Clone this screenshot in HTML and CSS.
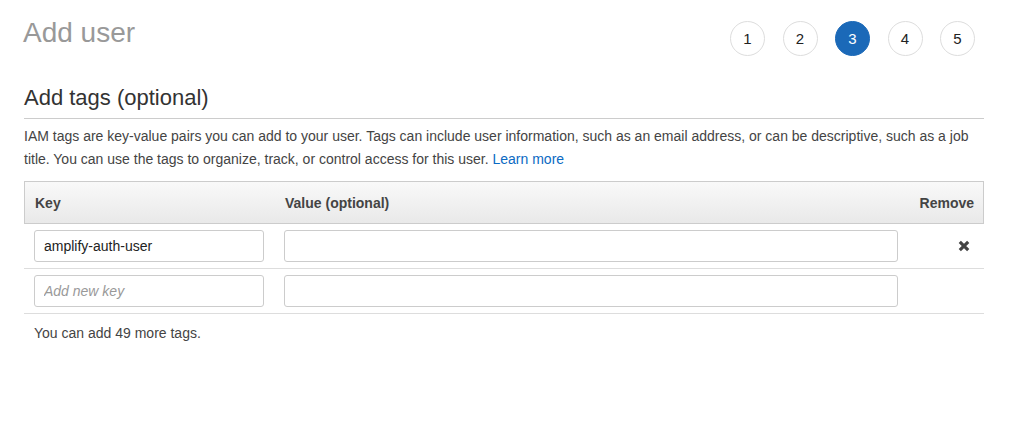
FILE: index.html
```html
<!DOCTYPE html>
<html lang="en">
<head>
<meta charset="utf-8">
<title>Add user</title>
<link rel="stylesheet" href="styles.css">
</head>
<body>
<div class="page">
  <header class="top">
    <h1 class="title">Add user</h1>
    <ol class="steps">
      <li class="step">1</li>
      <li class="step">2</li>
      <li class="step active">3</li>
      <li class="step">4</li>
      <li class="step">5</li>
    </ol>
  </header>

  <h2 class="section">Add tags (optional)</h2>
  <p class="desc">IAM tags are key-value pairs you can add to your user. Tags can include user information, such as an email address, or can be descriptive, such as a job title. You can use the tags to organize, track, or control access for this user. <a href="#" class="link">Learn more</a></p>

  <div class="table">
    <div class="thead">
      <div class="th">Key</div>
      <div class="th">Value (optional)</div>
      <div class="th th-right">Remove</div>
    </div>
    <div class="tr">
      <div class="td"><input class="field" type="text" value="amplify-auth-user"></div>
      <div class="td"><input class="field" type="text" value=""></div>
      <div class="td td-right">
        <svg class="x" viewBox="0 0 10 10" width="12" height="12" aria-label="Remove"><path d="M1.5 1.5 L8.5 8.5 M8.5 1.5 L1.5 8.5" stroke="#444" stroke-width="2.6" stroke-linecap="butt"/></svg>
      </div>
    </div>
    <div class="tr">
      <div class="td"><input class="field" type="text" placeholder="Add new key"></div>
      <div class="td"><input class="field" type="text" value=""></div>
      <div class="td td-right"></div>
    </div>
  </div>

  <p class="note">You can add 49 more tags.</p>
</div>
</body>
</html>
```

FILE: styles.css
```css
* { box-sizing: border-box; }

html, body {
  margin: 0;
  padding: 0;
  background: #fff;
}

body {
  font-family: "Liberation Sans", Arial, Helvetica, sans-serif;
  color: #444;
  font-size: 14px;
}

.page {
  width: 960px;
  margin-left: 24px;
}

.top {
  display: flex;
  justify-content: space-between;
  align-items: flex-start;
  padding-top: 17px;
}

.title {
  margin: 0 0 0 -1px;
  font-size: 28px;
  line-height: 32px;
  font-weight: normal;
  color: #999;
}

.steps {
  list-style: none;
  margin: 4px 9px 0 0;
  padding: 0;
  display: flex;
  gap: 17.5px;
}

.step {
  width: 35px;
  height: 35px;
  border: 1px solid #ddd;
  border-radius: 50%;
  display: flex;
  align-items: center;
  justify-content: center;
  font-size: 15px;
  color: #222;
  background: #fff;
}

.step.active {
  background: #1b69b8;
  border-color: #1b69b8;
  color: #fff;
}

.section {
  margin: 29px 0 0 0;
  padding-bottom: 7px;
  font-size: 22px;
  line-height: 26px;
  font-weight: normal;
  color: #333;
  border-bottom: 1px solid #ccc;
}

.desc {
  margin: 6px 0 0 0;
  line-height: 23px;
  color: #444;
}

.link {
  color: #0b6ac3;
  text-decoration: none;
}

.table {
  margin-top: 10px;
}

.thead,
.tr {
  display: grid;
  grid-template-columns: 250px 634px 76px;
}

.thead {
  height: 43px;
  border: 1px solid #ccc;
  background: linear-gradient(#f9f9f9, #e9e9e9);
  align-items: center;
}

.th {
  font-weight: bold;
  color: #444;
  padding-left: 10px;
}

.th-right {
  text-align: right;
  padding-right: 11px;
}

.tr {
  border-bottom: 1px solid #ddd;
  padding: 6px 0;
  align-items: center;
}

.td {
  padding: 0 10px;
}

.td-right {
  display: flex;
  justify-content: flex-end;
  padding-right: 14px;
}

.field {
  display: block;
  width: 100%;
  height: 32px;
  border: 1px solid #ccc;
  border-radius: 3px;
  padding: 0 9px;
  font-family: "Liberation Sans", Arial, Helvetica, sans-serif;
  font-size: 14px;
  color: #222;
  background: #fff;
}

.field::placeholder {
  color: #999;
  font-style: italic;
}

.x {
  display: block;
}

.note {
  margin: 9px 0 0 10px;
  line-height: 20px;
  color: #444;
}
```
